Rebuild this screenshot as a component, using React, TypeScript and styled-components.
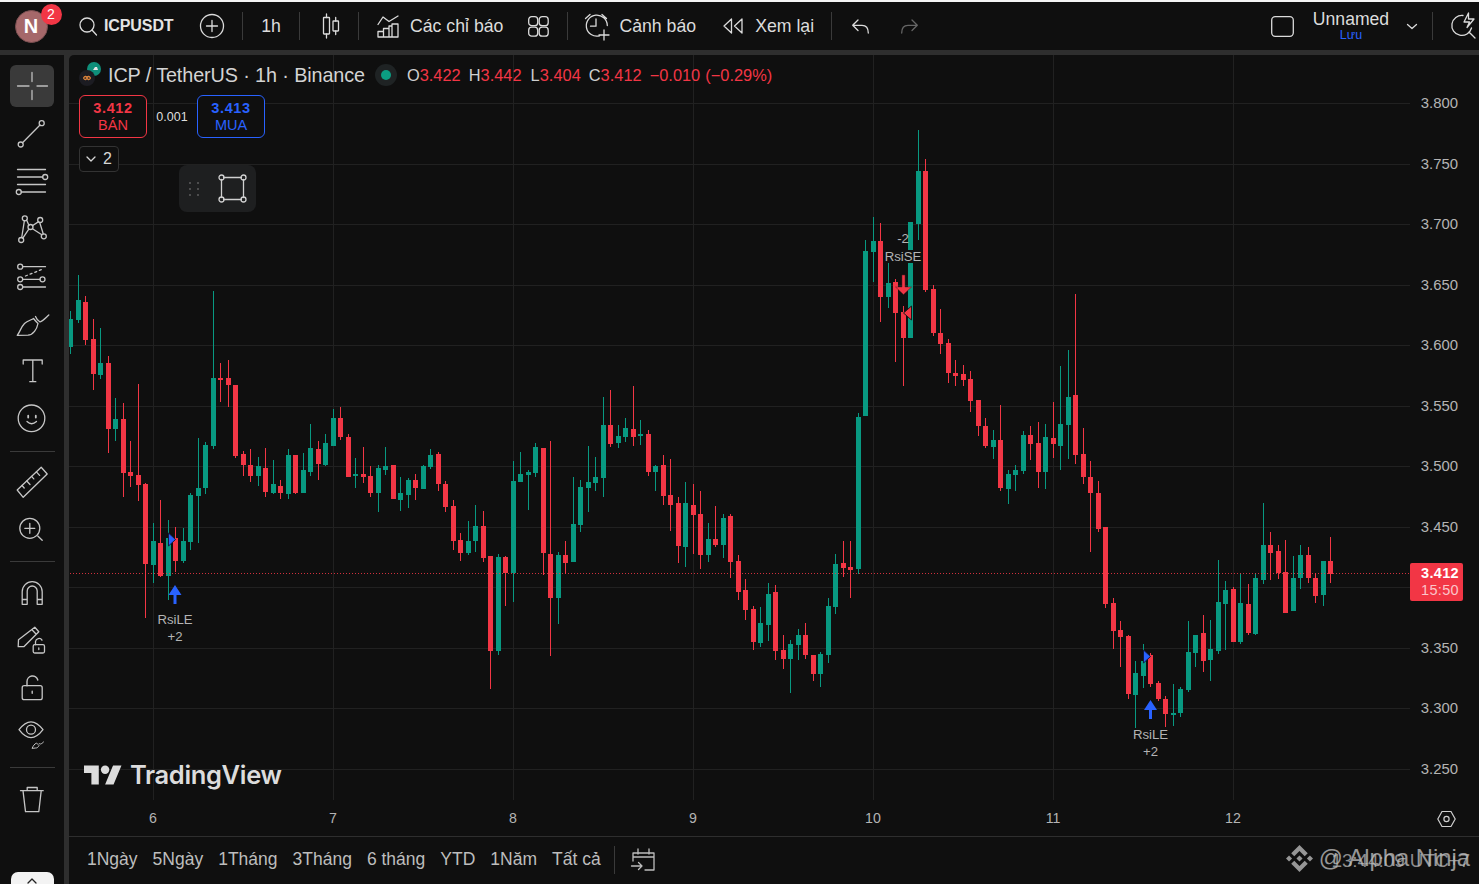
import React from "react";
import styled, { createGlobalStyle } from "styled-components";
import { SiBinance } from "react-icons/si";

const FONT = `"Liberation Sans", Arial, sans-serif`;
const BG = "#0f0f0f";
const DIV = "#2e2e2e";
const RED = "#f23645";
const GREEN = "#089981";
const BLUE = "#2962ff";

const Global = createGlobalStyle`
  html, body { margin: 0; padding: 0; background: ${BG}; }
  * { box-sizing: border-box; }
  body { font-family: ${FONT}; }
`;

const Page = styled.div`
  width: 1479px; height: 884px; overflow: hidden; background: ${DIV};
  border-top: 2px solid #f4f4f4; display: flex; flex-direction: column; color: #dbdbdb;
`;
const TopBar = styled.header`
  height: 48px; flex: none; background: ${BG}; display: flex; align-items: center;
`;
const Main = styled.div`
  flex: 1; min-height: 0; margin-top: 5px; display: flex; gap: 5px;
`;
const Cell = styled.div<{ $w: number }>`
  width: ${(p) => p.$w}px; flex: none; height: 100%; display: flex; align-items: center; justify-content: center;
  position: relative;
`;
const Sep = styled.div`
  width: 1px; height: 28px; background: #3a3a3a; flex: none;
`;
const Avatar = styled.div`
  width: 33px; height: 33px; border-radius: 50%; background: #a5686a; color: #fff; font-size: 20px; font-weight: 700;
  display: flex; align-items: center; justify-content: center; border: 1px solid #7c5052; margin-right: 7px;
  position: relative;
`;
const Badge = styled.span`
  position: absolute; left: 25px; top: -7px; width: 21px; height: 21px; border-radius: 50%; background: ${RED};
  color: #fff; font-size: 14px; font-weight: 400; display: flex; align-items: center; justify-content: center;
`;
const SymbolBtn = styled.div`
  width: 124px; flex: none; display: flex; align-items: center; gap: 7px; padding-left: 10px;
`;
const SymbolName = styled.span`
  font-size: 16px; font-weight: 700; letter-spacing: -0.1px; color: #e4e4e4;
`;
const BarText = styled.span`
  font-size: 17.7px; color: #dcdcdc; white-space: nowrap;
`;
const Labeled = styled.div<{ $l: number; $gap: number }>`
  display: flex; align-items: center; flex: none; margin-left: ${(p) => p.$l}px; gap: ${(p) => p.$gap}px;
`;
const Spacer = styled.div`
  flex: 1;
`;
const LayoutName = styled.div`
  width: 76px; margin-left: 19px; display: flex; flex-direction: column; align-items: center; flex: none;
`;
const Unnamed = styled.span`
  font-size: 17.6px; line-height: 18px; color: #dcdcdc; white-space: nowrap; margin-top: -1px;
`;
const Save = styled.span`
  font-size: 12.5px; line-height: 13px; color: ${BLUE}; margin-top: 1px;
`;
const Ico = styled.svg`
  flex: none; overflow: visible; display: block; fill: none; stroke: currentColor; stroke-width: 1.3px;
  stroke-linecap: round; stroke-linejoin: round;
`;
const Dim = styled.div`
  color: #666; display: flex;
`;

const LeftBar = styled.nav`
  width: 64px; flex: none; background: ${BG}; padding-top: 7.25px; display: flex; flex-direction: column; align-items: center;
  color: #c6c6c6;
`;
const Tool = styled.div`
  width: 64px; height: 47.5px; flex: none; display: flex; align-items: center; justify-content: center; position: relative;
`;
const ActiveTool = styled.div`
  width: 44px; height: 42px; border-radius: 6px; background: #3a3a3a; display: flex; align-items: center; justify-content: center; color: #bdbdbd;
`;
const ToolSep = styled.div<{ $t: number; $b: number }>`
  width: 45px; height: 1px; background: #3a3a3a; flex: none; margin: ${(p) => p.$t}px 0 ${(p) => p.$b}px;
`;
const WhiteBtn = styled.div`
  width: 43px; height: 42px; border-radius: 7px; background: #f3f3f3; margin-top: 48px; flex: none; color: #222;
  display: flex; justify-content: center; padding-top: 6px;
`;

const ChartCol = styled.main`
  flex: 1; min-width: 0; background: ${BG}; display: flex; flex-direction: column; border-top-left-radius: 5px; overflow: hidden;
`;
const ChartArea = styled.section`
  height: 781px; flex: none; position: relative;
`;
const ChartSvg = styled.svg`
  display: block;
`;
const Legend = styled.div`
  position: absolute; left: 10px; top: 8px; display: flex; flex-direction: column; align-items: flex-start;
`;
const TitleRow = styled.div`
  height: 24px; display: flex; align-items: center; white-space: nowrap; font-size: 16.4px;
`;
const Title = styled.span`
  font-size: 19.8px; color: #d4d4d4; margin-left: 5px; letter-spacing: -0.1px;
`;
const Status = styled.span`
  width: 22px; height: 22px; border-radius: 50%; background: #1f2324; margin: 0 10px; display: flex; align-items: center; justify-content: center;
`;
const StatusDot = styled.i`
  width: 10px; height: 10px; border-radius: 50%; background: #0b9e82; display: block;
`;
const Key = styled.span<{ $l: number }>`
  color: #cfcfcf; margin-left: ${(p) => p.$l}px;
`;
const Val = styled.span<{ $l?: number }>`
  color: ${RED}; margin-left: ${(p) => p.$l ?? 0}px;
`;
const TradeRow = styled.div`
  display: flex; align-items: center; margin-top: 8px;
`;
const TradeBox = styled.div<{ $c: string }>`
  width: 68px; height: 43px; border: 1px solid ${(p) => p.$c}; border-radius: 6px; color: ${(p) => p.$c}; display: flex; flex-direction: column;
  align-items: center; justify-content: center; background: ${BG};
`;
const TradePrice = styled.span`
  font-size: 14.5px; line-height: 17px; font-weight: 700; letter-spacing: 0.6px;
`;
const TradeLabel = styled.span`
  font-size: 14.5px; line-height: 17px;
`;
const Spread = styled.span`
  width: 50px; text-align: center; font-size: 12.5px; color: #dedede;
`;
const Collapse = styled.div`
  width: 40px; height: 26px; margin-top: 8px; border: 1px solid #333; border-radius: 4px; display: flex; align-items: center; justify-content: center; gap: 7px;
  font-size: 16px; color: #d6d6d6; background: ${BG};
`;
const FloatBar = styled.div`
  position: absolute; left: 110px; top: 110px; width: 77px; height: 47px; border-radius: 8px; background: #1e1f20; display: flex; align-items: center;
  padding-left: 10px; gap: 20px; color: #d0d0d0;
`;
const Grip = styled.div`
  display: grid; grid-template-columns: repeat(2, 2px); gap: 4px 6px; flex: none;
`;
const GripDot = styled.i`
  width: 2px; height: 2px; background: #5c5c5c; border-radius: 50%; display: block;
`;
const Watermark = styled.div`
  position: absolute; left: 15px; top: 707px; display: flex; align-items: center; gap: 8px; color: #dcdcdc;
`;
const WatermarkText = styled.span`
  font-family: Inter, ${FONT}; font-size: 25.5px; font-weight: 600; letter-spacing: -0.35px; line-height: 26px;
`;
const PriceTag = styled.div`
  position: absolute; left: 1341px; top: 508px; width: 53px; height: 38px; background: ${RED}; border-radius: 2px; color: #fff;
  display: flex; flex-direction: column; align-items: center; justify-content: center; padding-left: 7px;
`;
const TagPrice = styled.span`
  font-size: 14.5px; line-height: 17px; font-weight: 700; letter-spacing: .3px;
`;
const TagTime = styled.span`
  font-size: 14.5px; line-height: 17px; color: rgba(255, 255, 255, 0.72); letter-spacing: .3px;
`;
const BottomBar = styled.footer`
  flex: 1; min-height: 0; border-top: 1px solid ${DIV}; display: flex; align-items: center; padding-left: 18px; color: #bdbdbd; position: relative;
  padding-bottom: 2px;
`;
const Range = styled.span`
  font-size: 17.5px; margin-right: 15px; white-space: nowrap;
`;
const BottomSep = styled.div`
  width: 1px; height: 28px; background: #3a3a3a; margin: 0 16px 0 -2px; flex: none;
`;
const Stamp = styled.div`
  position: absolute; right: 9px; top: 7px; display: flex; align-items: center; gap: 6px; color: #969696; font-size: 23.8px; white-space: nowrap;
`;
const StampClock = styled.span`
  position: absolute; right: 0; top: 6px; font-size: 19px; letter-spacing: -0.1px; color: rgba(190, 190, 190, 0.72);
`;

type C = ["g" | "r", number, number, number, number];
const seg = (ox: number, oy: number, startK: number, rows: C[]) =>
  rows.map(([c, wt, wb, bt, bb], i) => ({
    k: startK + i,
    c,
    wt: Math.round(oy + wt / 3),
    wb: Math.round(oy + wb / 3),
    bt: Math.round(oy + bt / 3),
    bb: Math.round(oy + bb / 3),
  }));

const candles = [
  ...seg(70, 260, -11, [
    ["g",153,282,177,261],["g",45,188,120,180],["r",108,255,126,240],["r",177,390,237,342],["g",204,357,309,345],
    ["r",288,579,309,507],["g",414,543,477,507],["r",429,711,477,639],["r",543,681,636,648],["r",372,723,645,675],
    ["r",669,1074,672,912],["g",789,969,843,915],["r",720,951,849,948],["g",780,1020,834,948],["r",801,936,834,903],
    ["g",804,909,843,903],["g",699,870,705,846],["g",534,849,684,708],["g",546,702,555,684],["g",93,567,354,558],
    ["r",309,426,354,360],["r",300,441,354,375],["r",375,594,375,588],["r",573,648,582,615],["r",567,666,615,648],
    ["g",591,678,618,648],["r",564,711,624,696],["g",600,702,672,699],["r",660,717,678,699],["g",567,717,585,702],
    ["r",585,702,585,699],["g",579,699,630,699],["g",492,648,564,636],["r",543,660,567,612],["g",522,618,549,615],
    ["g",447,558,474,558],["r",441,540,474,531],["r",522,651,531,651],["g",594,684,642,648],["r",561,669,642,651],
    ["r",618,711,648,699],["g",615,756,624,699],["g",561,645,618,630],["r",615,717,615,717],
  ]),
  ...seg(400, 380, 33, [
    ["g",291,393,339,360],["g",294,384,300,345],["r",282,360,300,324],["g",255,327,258,327],["g",207,267,225,261],
    ["r",216,333,222,312],["r",303,396,312,381],["r",360,510,378,483],["r",459,543,480,519],["g",423,525,483,519],
    ["g",375,516,438,483],["r",393,546,438,534],["r",528,927,528,813],["g",522,825,531,813],["r",528,678,531,579],
    ["g",243,666,303,579],["g",216,306,282,306],["g",270,390,276,285],["g",189,291,201,279],["r",204,585,204,519],
    ["r",183,828,522,654],["g",516,732,525,654],["r",483,582,525,549],["g",291,546,432,546],["g",300,456,321,435],
    ["g",198,396,306,324],["g",231,333,291,309],["g",51,351,135,294],["r",30,201,135,192],["g",135,204,168,189],
    ["g",114,186,144,171],["r",18,198,147,171],["g",120,195,162,168],["r",150,288,162,276],["g",255,333,258,276],
    ["r",225,375,255,348],["r",237,453,345,375],["r",351,549,369,498],["g",306,561,369,501],["r",312,522,375,405],
    ["r",333,567,402,525],["g",429,546,477,525],["r",378,501,477,495],["g",402,534,414,495],["r",402,594,408,546],
    ["r",525,660,543,636],["r",597,720,630,690],["r",678,810,687,786],["g",681,801,729,789],["g",609,783,642,735],
    ["r",615,840,636,813],["r",765,867,810,837],["g",780,939,792,837],["g",747,840,765,795],["r",729,837,765,825],
    ["r",825,903,825,882],["g",816,921,822,882],["g",654,849,678,825],["g",522,702,552,681],["r",483,591,549,564],
    ["r",483,654,561,570],["g",-1,582,111,567],
  ]).map((c) => (c.k === 94 ? { ...c, wt: 413, wb: 574 } : c)),
  ...seg(830, 120, 95, [
    ["g",360,888,393,888],["g",291,486,363,396],["r",309,606,363,531],["g",429,564,489,531],["r",477,726,486,579],
    ["r",558,798,576,654],["g",306,654,306,654],["g",30,360,153,312],["r",117,516,153,510],["r",495,648,507,639],
    ["r",567,702,639,672],["r",657,789,669,759],["r",720,798,759,768],["r",735,798,762,780],["r",753,876,777,843],
    ["r",840,948,840,918],["r",894,984,918,978],["g",930,1017,960,981],["r",855,1113,960,1104],["g",1050,1152,1062,1107],
    ["g",1035,1113,1050,1065],["g",933,1062,945,1053],["r",918,1020,945,972],["r",906,1104,969,1056],["g",912,1107,951,1056],
    ["r",846,1014,954,972],["g",738,1050,912,978],["g",690,1017,831,915],["r",522,1032,825,1005],["r",924,1092,1002,1071],
  ]),
  ...seg(1070, 450, 125, [
    ["r",33,306,81,129],["r",93,246,129,237],["r",231,474,231,462],["r",444,597,459,543],["r",513,651,540,561],
    ["r",555,747,558,732],["g",633,834,669,735],["g",582,714,633,678],["r",609,711,615,702],["r",693,753,699,747],
    ["r",738,831,747,792],["g",702,828,789,792],["g",711,801,717,789],["g",513,726,606,720],["g",555,651,555,609],
    ["r",495,666,549,633],["g",510,693,597,630],["g",330,612,456,603],["g",393,600,420,462],["r",411,576,417,576],
    ["g",369,582,459,576],["r",402,555,462,549],["g",369,555,384,552],["g",159,402,285,390],["r",246,390,285,309],
    ["r",285,387,303,369],["r",270,489,366,489],["g",318,483,384,483],["g",285,417,315,384],["r",291,399,315,384],
    ["r",369,459,384,438],["g",333,468,333,435],["r",261,399,333,372],
  ]),
];

const gridYs = [103, 164, 224, 285, 345, 406, 466, 527, 587, 648, 708, 769];
const prices = ["3.800","3.750","3.700","3.650","3.600","3.550","3.500","3.450","","3.350","3.300","3.250"];
const dayXs = [153, 333, 513, 693, 873, 1053, 1233];
const days = ["6", "7", "8", "9", "10", "11", "12"];

const SigLabel = ({ x, y, children }: { x: number; y: number; children: React.ReactNode }) => (
  <text x={x} y={y} textAnchor="middle" fontFamily={FONT} fontSize="13.2" fill="#b4b4b4">{children}</text>
);

const UpArrow = ({ x, y }: { x: number; y: number }) => (
  <path d={`M${x} ${y} L${x + 6.5} ${y + 10} H${x + 1.5} V${y + 19} H${x - 1.5} V${y + 10} H${x - 6.5} Z`} fill={BLUE} />
);

const Chart = () => (
  <ChartSvg width="1410" height="781" viewBox="69 55 1410 781">
    <g stroke="#212121" strokeWidth="1" shapeRendering="crispEdges">
      {gridYs.map((y) => <line key={y} x1="69" x2="1410" y1={y + 0.5} y2={y + 0.5} />)}
      {dayXs.map((x) => <line key={x} x1={x + 0.5} x2={x + 0.5} y1="55" y2="800" />)}
    </g>
    <g shapeRendering="crispEdges">
      {candles.map((c) => {
        const left = Math.round(153.3 + 7.5 * c.k - 2.5);
        const fill = c.c === "g" ? GREEN : RED;
        return (
          <g key={c.k} fill={fill}>
            <rect x={left + 2} y={c.wt} width="1" height={Math.max(c.wb - c.wt, 1)} />
            <rect x={left} y={c.bt} width="5" height={Math.max(c.bb - c.bt, 2)} />
          </g>
        );
      })}
      <rect x="886" y="250" width="34" height="13" fill={BG} />
      {Array.from({ length: 447 }).map((_, i) => (
        <rect key={i} x={70 + i * 3} y="573" width="1" height="1" fill={RED} opacity="0.85" />
      ))}
    </g>
    <UpArrow x={175} y={585} />
    <UpArrow x={1150.5} y={700} />
    <path d="M168.5 533 L175.5 539.5 L168.5 546 Z" fill={BLUE} stroke="#0e1a44" strokeWidth="1" />
    <path d="M1143.5 650 L1150.5 656.5 L1143.5 663 Z" fill={BLUE} stroke="#0e1a44" strokeWidth="1" />
    <path d="M902 275 H905 V287 H911.5 L903.5 294.5 L895.5 287 H902 Z" fill={RED} stroke="#5c1a20" strokeWidth="0.5" />
    <path d="M911.5 306 L903.5 313 L911.5 320 Z" fill={RED} stroke="#1a1a1a" strokeWidth="1" />
    <SigLabel x={175} y={624}>RsiLE</SigLabel>
    <SigLabel x={175} y={641}>+2</SigLabel>
    <SigLabel x={1150.5} y={739}>RsiLE</SigLabel>
    <SigLabel x={1150.5} y={756}>+2</SigLabel>
    <SigLabel x={903} y={243}>-2</SigLabel>
    <SigLabel x={903} y={261}>RsiSE</SigLabel>
    <g fontFamily={FONT} fontSize="14.9" fill="#b4b4b4">
      {prices.map((p, i) => (p ? <text key={p} x="1458" y={gridYs[i] + 4.5} textAnchor="end">{p}</text> : null))}
    </g>
    <g fontFamily={FONT} fontSize="14.2" fill="#b4b4b4" textAnchor="middle">
      {days.map((d, i) => <text key={d} x={dayXs[i]} y="823">{d}</text>)}
    </g>
    <g fill="none" stroke="#cfcfcf" strokeWidth="1.2">
      <path d="M1437.8 819 L1442 811.5 H1451 L1455.2 819 L1451 826.5 H1442 Z" />
      <circle cx="1446.5" cy="819" r="2.6" />
    </g>
  </ChartSvg>
);

const Dot = ({ cx, cy, r = 2.5 }: { cx: number; cy: number; r?: number }) => <circle cx={cx} cy={cy} r={r} />;

const icons: Record<string, React.ReactNode> = {
  cross: <path d="M16 7V16M16 25V34M1.5 20.5H13M21 20.5H31.5" transform="translate(0 -4.5)" />,
  line: <><Dot cx={25.7} cy={5.2} /><Dot cx={4.7} cy={26.5} /><path d="M6.5 24.7L24 7" /></>,
  fib: <><path d="M1.5 4.5H29.5M1.5 12H26.7M1.5 19.5H29.5M5.3 27H29.5" /><Dot cx={29.2} cy={12} /><Dot cx={2.8} cy={27} /></>,
  pattern: <><path d="M5.7 24.5L8.4 7.7M10.6 7L13 12.5M16.5 15.7L25.8 21.8M23.7 9.5L27.3 21M6.8 25.2L12.8 16.2M16.4 12.7L22.6 8.6" /><Dot cx={8.8} cy={5.3} /><Dot cx={24.2} cy={7} /><Dot cx={14.5} cy={14} /><Dot cx={27.8} cy={23.3} /><Dot cx={5.2} cy={27} /></>,
  forecast: <><path d="M6.7 6.7H29.5M6.7 19.3H24M6.7 27H29.5" /><path d="M9.500 16L27 9" strokeDasharray="2 3" /><Dot cx={4.2} cy={6.7} /><Dot cx={4.2} cy={19.3} /><Dot cx={26.5} cy={19.3} /><Dot cx={4.2} cy={27} /></>,
  brush: <path d="M1.2 27.3C4 24 5 19 8.500 15.500C11.500 13 15 12 17.500 10.500C19 12.500 20.500 14 22 15.500C21 21 17 27 12 27.200ZM19.500 8.500C20.500 11 22 13 24 14C27 13 30 9.500 32.800 7" />,
  text: <path d="M7.2 9V5H26.2V9M16.8 5V26.7M13.8 26.7H19.8" />,
  emoji: <><circle cx={15.5} cy={15.3} r={13.3} /><path d="M11 18.5Q15.5 23 20.5 18.5" /><path d="M12.2 12.7V14.5M19.8 12.7V14.5" strokeWidth="1.8" /></>,
  ruler: <><path d="M1.2 24L25.2 1.3L31.2 8L7.2 31.3Z" /><path d="M6 19.5L8.2 22M10.8 15L14 18.5M15.6 10.4L17.8 12.9M20.4 5.9L23.6 9.4" /></>,
  zoom: <><circle cx={13.8} cy={14.3} r={10} /><path d="M8.8 14.3H18.8M13.8 9.3V19.3M21.8 22L26.2 26.3" /></>,
  magnet: <path d="M6.2 27.3V14.7A10 10 0 0 1 26.2 14.7V27.3H21.2V14A5 5 0 0 0 11.2 14V27.3ZM6.2 22.5H11.2M21.2 22.5H26.2" />,
  pencil: <><path d="M2.5 15.7L18.8 3.3L22.8 7.7L7.8 22.7H2.2ZM16 5.8L20 10" /><rect x={17.2} y={20.7} width={11.3} height={8.3} rx={1.5} /><path d="M19.5 20.7V17.5A3.5 3.5 0 0 1 26 16.2M22.8 24V25.6" /></>,
  lock: <><rect x={6.2} y={13.7} width={20} height={14} rx={2} /><path d="M11 13.7V9.5A5.5 5.5 0 0 1 21.8 8M16.2 19.3V21.3" strokeWidth="1.4" /></>,
  eye: <><path d="M3 10.7Q15 -5 27 10.7Q15 26.5 3 10.7Z" /><circle cx={15} cy={10.7} r={4.5} /><path d="M16.2 29C17.2 26.8 18.5 25 20.5 24C21.5 25 22.3 25.8 23 26.5C22 28.5 21 29 20 29ZM23 24.3C24 25.5 25 25.5 27.5 23" strokeWidth="1" /></>,
  trash: <path d="M4.5 6.7H27.2M11.2 6.7V3.5H21.2V6.7M7 6.7L9.5 27.7H22.8L25.2 6.7" />,
};

const Icon = ({ name }: { name: string }) => (
  <Tool><Ico width="32" height="32" viewBox="0 0 32 32">{icons[name]}</Ico></Tool>
);

export default function App() {
  return (
    <Page>
      <Global />
      <TopBar>
        <Cell $w={69}><Avatar>N<Badge>2</Badge></Avatar></Cell>
        <SymbolBtn>
          <Ico width="18" height="20" viewBox="0 0 18 20" strokeWidth="1.6"><circle cx="8" cy="9" r="7" /><path d="M13 14l4.5 5" /></Ico>
          <SymbolName>ICPUSDT</SymbolName>
        </SymbolBtn>
        <Cell $w={38}><Ico width="24" height="24" viewBox="0 0 24 24"><circle cx="12" cy="12" r="11.5" /><path d="M12 6.5v11M6.5 12h11" /></Ico></Cell>
        <Cell $w={11} />
        <Sep />
        <Cell $w={56}><BarText>1h</BarText></Cell>
        <Sep />
        <Labeled $l={22} $gap={0}>
          <Ico width="18" height="26" viewBox="0 0 18 26"><rect x="1.5" y="4.5" width="6" height="16.5" rx=".5" /><path d="M4.5 1v3.5M4.5 21v4" /><rect x="11" y="8" width="5.5" height="10" rx=".5" /><path d="M13.7 4.5V8M13.7 18v3.5" /></Ico>
        </Labeled>
        <Cell $w={18} />
        <Sep />
        <Labeled $l={18} $gap={11}>
          <Ico width="22" height="24" viewBox="0 0 22 24"><path d="M1 10.5L6 3L12 7.5L21 2" /><path d="M1 17.5h5.5V23H1zM6.5 14.5H12V23H6.5zM12 12h3v11h-3zM15 10h6v13h-6z" /></Ico>
          <BarText>Các chỉ báo</BarText>
        </Labeled>
        <Labeled $l={25} $gap={0}>
          <Ico width="21" height="21" viewBox="0 0 21 21"><rect x=".7" y=".7" width="9" height="9" rx="3" /><rect x="11.2" y=".7" width="9" height="9" rx="3" /><rect x=".7" y="11.2" width="9" height="9" rx="3" /><rect x="11.2" y="11.2" width="9" height="9" rx="3" /></Ico>
        </Labeled>
        <Cell $w={18} />
        <Sep />
        <Labeled $l={16} $gap={9}>
          <Ico width="26" height="26" viewBox="0 0 26 26"><path d="M15 23.8A10.5 10.5 0 1 1 22.8 13.5M11.5 7v7.2H6M1 6.5L5.5 2.5M17.5 2.5L22 6.5M19.5 18v10M14.5 23h10" transform="translate(0.5 -1)" /></Ico>
          <BarText>Cảnh báo</BarText>
        </Labeled>
        <Labeled $l={27} $gap={12}>
          <Ico width="20" height="16" viewBox="0 0 20 16"><path d="M8.5 1L1 8L8.5 15ZM19 1L11.5 8L19 15Z" /></Ico>
          <BarText>Xem lại</BarText>
        </Labeled>
        <Cell $w={17} />
        <Sep />
        <Labeled $l={20} $gap={32}>
          <Ico width="17" height="15" viewBox="0 0 17 15"><path d="M6 1L.7 6.3L6 11.5M.7 6.3H10Q16.3 6.3 16.3 14" /></Ico>
          <Dim><Ico width="17" height="15" viewBox="0 0 17 15"><path d="M11 1L16.3 6.3L11 11.5M16.3 6.3H7Q.7 6.3 .7 14" /></Ico></Dim>
        </Labeled>
        <Spacer />
        <Ico width="23" height="21" viewBox="0 0 23 21" stroke="#bbb"><rect x=".7" y=".7" width="21.6" height="19.6" rx="3.5" /></Ico>
        <LayoutName><Unnamed>Unnamed</Unnamed><Save>Lưu</Save></LayoutName>
        <Labeled $l={18} $gap={0}>
          <Ico width="10" height="5" viewBox="0 0 10 5"><path d="M.5 .5L5 4.5L9.5 .5" /></Ico>
        </Labeled>
        <Cell $w={15} />
        <Sep />
        <Labeled $l={18} $gap={0}>
          <Ico width="26" height="26" viewBox="0 0 26 26"><path d="M12 3.5A10 10 0 1 0 20.5 16M18 20l6 6M17.5 1L13 10h5.5L16 15.5l7-8.5h-5.5z" transform="translate(0 -1)" /></Ico>
        </Labeled>
        <Cell $w={2} />
      </TopBar>
      <Main>
        <LeftBar>
          <Tool><ActiveTool><Ico width="32" height="32" viewBox="0 0 32 32">{icons.cross}</Ico></ActiveTool></Tool>
          <Icon name="line" />
          <Icon name="fib" />
          <Icon name="pattern" />
          <Icon name="forecast" />
          <Icon name="brush" />
          <Icon name="text" />
          <Icon name="emoji" />
          <ToolSep $t={8.5} $b={6.75} />
          <Icon name="ruler" />
          <Icon name="zoom" />
          <ToolSep $t={7.5} $b={6.75} />
          <Icon name="magnet" />
          <Icon name="pencil" />
          <Icon name="lock" />
          <Icon name="eye" />
          <ToolSep $t={8} $b={8.5} />
          <Icon name="trash" />
          <WhiteBtn><Ico width="10" height="6" viewBox="0 0 10 6"><path d="M1 5L5 1L9 5" /></Ico></WhiteBtn>
        </LeftBar>
        <ChartCol>
          <ChartArea>
            <Chart />
            <Legend>
              <TitleRow>
                <Ico width="24" height="24" viewBox="0 0 24 24" strokeWidth="1">
                  <circle cx="15" cy="6" r="7" fill="#0f8f7a" stroke="none" />
                  <path d="M14 7l2-3h2l1 3z" fill="#e6e6e6" stroke="none" />
                  <circle cx="8" cy="15" r="8" fill="#1c1c22" stroke="none" />
                  <path d="M4.5 15c1.5-2.5 3-1.5 3.5 0s2 2.5 3.5 0c-1.500-2.500-3-1.500-3.500 0s-2 2.500-3.500 0z" stroke="#d9823b" fill="none" />
                </Ico>
                <Title>ICP / TetherUS · 1h · Binance</Title>
                <Status><StatusDot /></Status>
                <Key $l={0}>O</Key><Val>3.422</Val>
                <Key $l={8}>H</Key><Val>3.442</Val>
                <Key $l={9}>L</Key><Val>3.404</Val>
                <Key $l={8}>C</Key><Val>3.412</Val>
                <Val $l={8}>−0.010</Val>
                <Val $l={5}>(−0.29%)</Val>
              </TitleRow>
              <TradeRow>
                <TradeBox $c={RED}><TradePrice>3.412</TradePrice><TradeLabel>BÁN</TradeLabel></TradeBox>
                <Spread>0.001</Spread>
                <TradeBox $c={BLUE}><TradePrice>3.413</TradePrice><TradeLabel>MUA</TradeLabel></TradeBox>
              </TradeRow>
              <Collapse>
                <Ico width="10" height="6" viewBox="0 0 10 6"><path d="M1 1L5 5L9 1" /></Ico>2
              </Collapse>
            </Legend>
            <FloatBar>
              <Grip>{Array.from({ length: 6 }).map((_, i) => <GripDot key={i} />)}</Grip>
              <Ico width="27" height="27" viewBox="0 0 27 27"><path d="M4.500 2.500H22.500M4.500 24.500H22.500M2.500 4.500V22.500M24.500 4.500V22.500" /><Dot cx={2.5} cy={2.5} /><Dot cx={24.5} cy={2.5} /><Dot cx={2.5} cy={24.5} /><Dot cx={24.5} cy={24.5} /></Ico>
            </FloatBar>
            <Watermark>
              <svg width="38" height="20" viewBox="0 4 36 18" fill="currentColor" style={{ display: "block" }}>
                <path d="M14 22H7V11H0V4h14v18zM28 22h-8l7.500-18h8L28 22z" /><circle cx="20" cy="8" r="4" />
              </svg>
              <WatermarkText>TradingView</WatermarkText>
            </Watermark>
            <PriceTag><TagPrice>3.412</TagPrice><TagTime>15:50</TagTime></PriceTag>
          </ChartArea>
          <BottomBar>
            <Range>1Ngày</Range><Range>5Ngày</Range><Range>1Tháng</Range><Range>3Tháng</Range><Range>6 tháng</Range><Range>YTD</Range><Range>1Năm</Range><Range>Tất cả</Range>
            <BottomSep />
            <Ico width="24" height="23" viewBox="0 0 24 23"><path d="M2 13V5H23V22H14M2 9H23M7 1v5M18 1v5M0.500 18H11M7.500 14.500L11 18L7.500 21.500" /></Ico>
            <Stamp>
              <SiBinance size={27} />
              <span>@ Alpha Ninja</span>
              <StampClock>13:44:09 UTC+7</StampClock>
            </Stamp>
          </BottomBar>
        </ChartCol>
      </Main>
    </Page>
  );
}
